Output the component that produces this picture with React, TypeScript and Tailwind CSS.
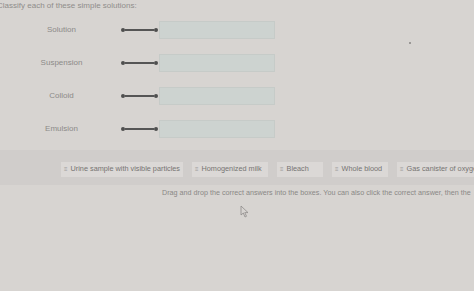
import React from 'react';

const ROWS = ['Solution', 'Suspension', 'Colloid', 'Emulsion'];

const CHIPS = [
  { label: 'Urine sample with visible particles', w: 'w-[122px]' },
  { label: 'Homogenized milk', w: 'w-[76px]' },
  { label: 'Bleach', w: 'w-[46px]' },
  { label: 'Whole blood', w: 'w-[56px]' },
  { label: 'Gas canister of oxygen', w: 'w-[90px]' },
];

function Connector() {
  return (
    <div className="relative flex items-center w-[40px] h-[6px] pl-[2px] pr-[1px]">
      <span className="block w-[4px] h-[4px] rounded-full bg-[#4e4e4e]" />
      <span className="block flex-1 h-[2px] bg-[#555555]" />
      <span className="block w-[4px] h-[4px] rounded-full bg-[#4e4e4e]" />
    </div>
  );
}

export default function App() {
  return (
    <div
      className="relative w-[474px] h-[291px] overflow-hidden bg-[#d7d4d1]"
      style={{ fontFamily: '"Liberation Sans", Arial, sans-serif' }}
    >
      {/* Title */}
      <p className="ml-[-3px] pt-[1px] h-[21px] text-[8px] leading-[10px] text-[#8f8d8b]">
        Classify each of these simple solutions:
      </p>

      {/* Rows */}
      <div className="flex flex-col gap-[15px]">
        {ROWS.map((r) => (
          <div key={r} className="flex items-center h-[18px]">
            <span className="w-[119px] pl-[4px] text-center text-[8px] text-[#8c8a88]">{r}</span>
            <Connector />
            <div className="w-[116px] h-[18px] bg-[#cdd3d0] border border-[#c6cbc8]" />
          </div>
        ))}
      </div>

      {/* Answer band */}
      <div className="mt-[12px] h-[35px] bg-[#d0cdcb] flex items-center gap-[9px] pl-[61px] pt-[3px]">
        {CHIPS.map((c) => (
          <div
            key={c.label}
            className={`${c.w} shrink-0 h-[15px] flex items-center gap-[3px] px-[3px] bg-[#dbd8d6] whitespace-nowrap overflow-hidden`}
          >
            <span className="text-[6px] text-[#9a9896]">≡</span>
            <span className="text-[7.3px] text-[#767472]">{c.label}</span>
          </div>
        ))}
      </div>

      {/* Instructions */}
      <p className="mt-[3px] pl-[162px] text-[7.2px] leading-[10px] text-[#8a8886] whitespace-nowrap">
        Drag and drop the correct answers into the boxes. You can also click the correct answer, then the
      </p>

      {/* Mouse cursor */}
      <svg className="absolute left-[240px] top-[205px]" width="10" height="13" viewBox="0 0 10 13" fill="none">
        <path d="M1 1 L1 10 L3.3 8 L5 12 L6.5 11.3 L4.8 7.6 L8 7.6 Z" stroke="#8e8c8a" strokeWidth="0.8" strokeLinejoin="round" />
      </svg>

      {/* faint mark */}
      <span className="absolute left-[409px] top-[42px] w-[2px] h-[2px] bg-[#9a9896]" />
    </div>
  );
}
